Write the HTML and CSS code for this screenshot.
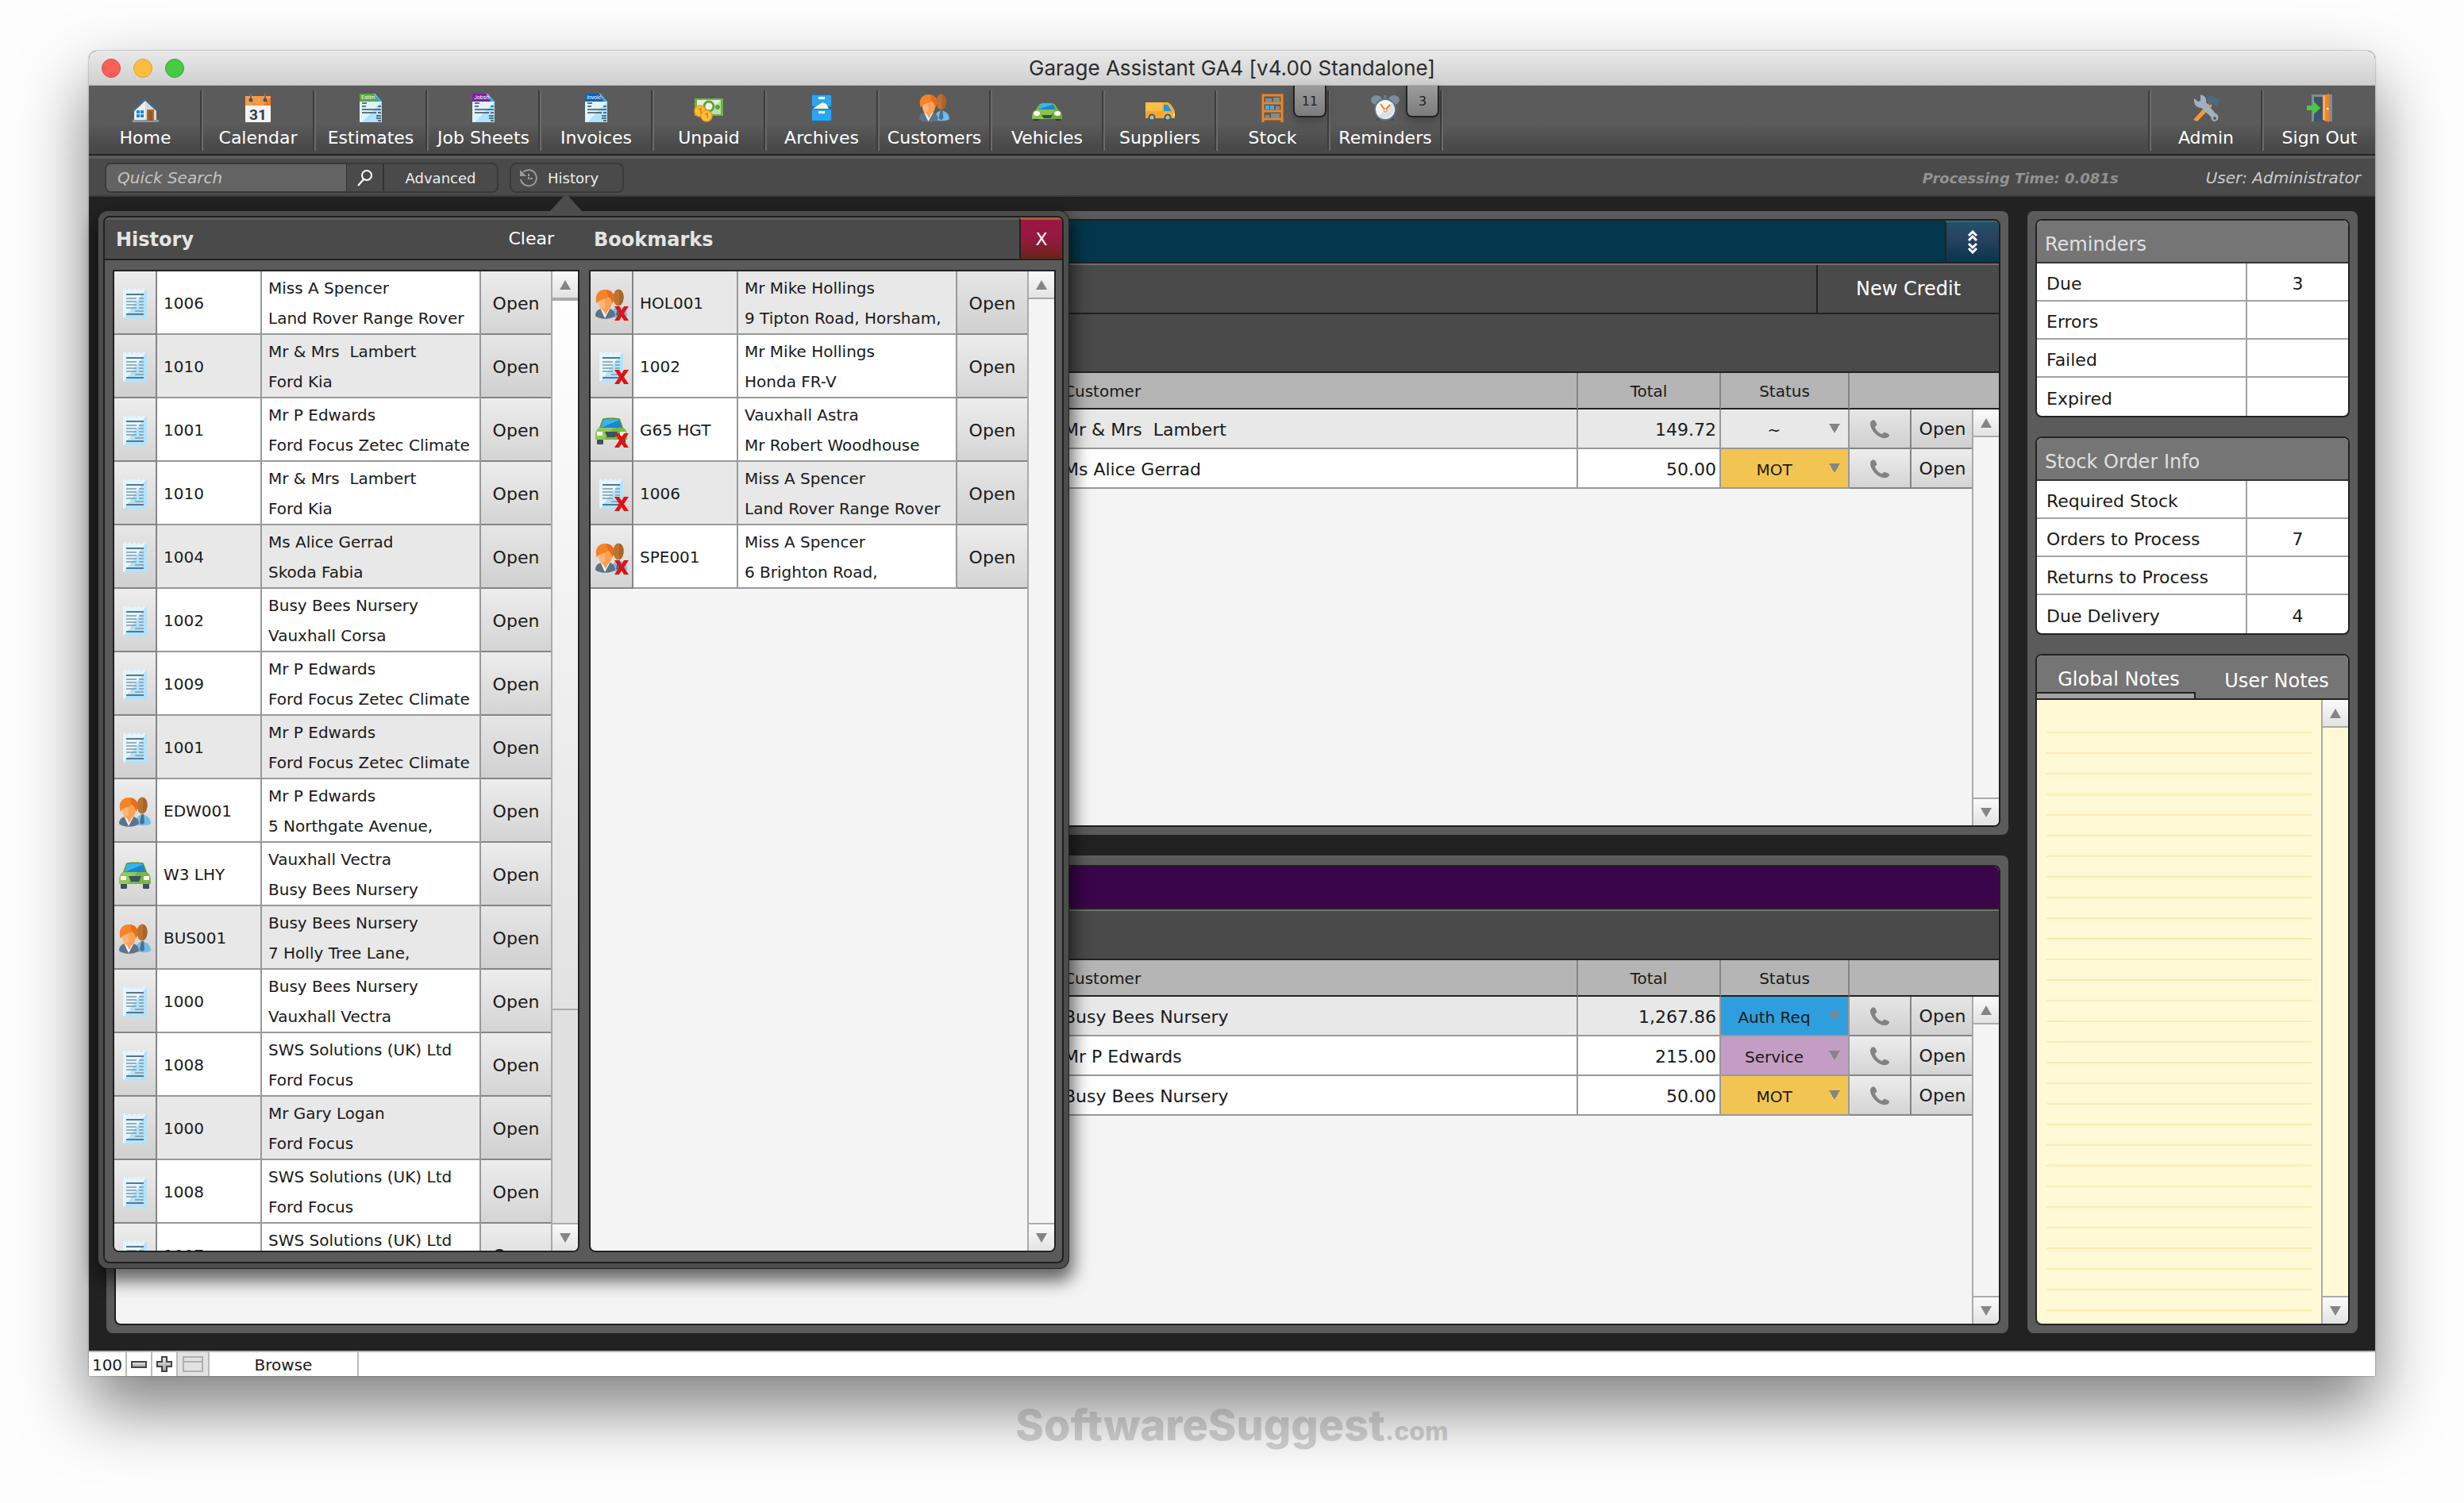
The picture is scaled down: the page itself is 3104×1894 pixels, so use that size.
FILE: index.html
```html
<!DOCTYPE html>
<html lang="en">
<head>
<meta charset="utf-8">
<title>Garage Assistant GA4</title>
<link rel="stylesheet" href="styles.css">
</head>
<body>
<svg class="sprite" aria-hidden="true">
  <defs>
    <linearGradient id="paper" x1="0" y1="0" x2="1" y2="1"><stop offset="0.5" stop-color="#e3f5fd"/><stop offset="0.5" stop-color="#b3e3fa"/></linearGradient>
    <linearGradient id="glass" x1="0" y1="0" x2="1" y2="1"><stop offset="0.5" stop-color="#36b3f3"/><stop offset="0.5" stop-color="#1a86cf"/></linearGradient>
    <linearGradient id="metal" x1="0" y1="0" x2="0" y2="1"><stop offset="0" stop-color="#eee"/><stop offset="1" stop-color="#999"/></linearGradient>
  </defs>
  <symbol id="i-home" viewBox="0 0 36 36">
    <path d="M4 20 18 7l14 13v14H4z" fill="#eceff1"/><path d="M18 7l14 13v14H18z" fill="#d5dade"/>
    <path d="M18 4 1 21l2 2L18 9l15 14 2-2z" fill="#4f6577"/><rect x="2" y="33" width="33" height="3" fill="#8a9aa5"/>
    <rect x="20" y="20" width="9" height="14" fill="#b5682c"/><rect x="22" y="22" width="5" height="12" fill="#9a5521"/>
    <path d="M7 21h4v4H7zM12 21h4v4h-4zM7 26h4v4H7zM12 26h4v4h-4z" fill="#1e88d6"/>
  </symbol>
  <symbol id="i-calendar" viewBox="0 0 36 36">
    <rect x="2" y="3" width="32" height="33" rx="1" fill="#f4f4f4"/><path d="M2 3h32v12H2z" fill="#fb9a44"/><path d="M24 15 34 5v10z" fill="#f47b20"/>
    <path d="M9 0v7M27 0v7" stroke="#607d8b" stroke-width="2"/><circle cx="9" cy="8" r="2.500" fill="#455a64"/><circle cx="27" cy="8" r="2.500" fill="#455a64"/>
  </symbol>
  <symbol id="i-sheet" viewBox="0 0 28 36">
    <path d="M0 0h19l9 10v26H0z" fill="#dff4fd"/><path d="M28 10v26H3z" fill="#b0e2fa"/>
    <path d="M0 0h18l6 10H0z" fill="currentColor"/><path d="M18 0l10 10h-5z" fill="#29a9ef"/>
    <path d="M3 12h6M3 16h5M3 20h18M3 24h18M23 16h4M21 20h6M23 24h4M21 28h6M21 31h6M23 34h4" stroke="#34495e" stroke-width="1.500"/>
  </symbol>
  <symbol id="i-unpaid" viewBox="0 0 36 36">
    <rect x="0" y="6" width="36" height="22" fill="#6cb33e"/><path d="M3 8h30v18H3z" fill="#dff0dd"/><path d="M33 8v18H14z" fill="#bcdcb9"/>
    <circle cx="18" cy="16" r="6" fill="#f2f2f2" stroke="#5aa52f" stroke-width="3"/><circle cx="29" cy="17" r="3" fill="#5aa52f"/>
    <circle cx="7" cy="22" r="7" fill="#fbc02d" stroke="#f09a20" stroke-width="1.500"/><circle cx="15" cy="28" r="7" fill="#fcc43c" stroke="#f09a20" stroke-width="1.500"/>
    <path d="M5 20l3-1v6M13 26l3-1v6" stroke="#e8871a" stroke-width="2" fill="none"/>
  </symbol>
  <symbol id="i-archive" viewBox="0 0 28 36">
    <rect x="1" y="1" width="26" height="34" fill="#1b6fb4"/><rect x="2" y="2" width="24" height="14" fill="#2aa5f0"/><rect x="2" y="20" width="24" height="14" fill="#2aa5f0"/>
    <rect x="10" y="4" width="8" height="3" fill="#fff"/><path d="M3 19l12-8 5 2 3 6z" fill="#fdf6d8"/><rect x="10" y="22" width="8" height="3" fill="#fff"/>
  </symbol>
  <symbol id="i-people" viewBox="0 0 40 38">
    <path d="M20 34c0-6 3-9 7-11h5c5 2 8 5 8 11-4 3-16 3-20 0z" fill="#6fbdeb"/><path d="M28 22h3l1 11-3 2-3-2z" fill="#4b6f8c"/>
    <ellipse cx="29" cy="11" rx="6.500" ry="10.500" fill="#b9742f"/><path d="M30 1c8 1 7 18 0 20z" fill="#a8652b"/>
    <path d="M0 34c0-5 3-8 7-9l5-2 6 2c4 1 7 4 7 9-5 5-20 5-25 0z" fill="#5c7486"/><path d="M6 24l6 13 7-13-7-3z" fill="#f5f5f5"/>
    <ellipse cx="12.500" cy="17" rx="8.500" ry="11" fill="#fdb674"/><path d="M12 28V9l8 5c2 8-3 14-8 14z" fill="#fba057"/><path d="M8 24h9l-4 9z" fill="#fba057"/>
    <path d="M2 19C-2 8 4 1 12 1s15 7 9 18c0-5-2-7-5-9-4 4-12 3-14 9z" fill="#f58426"/><path d="M14 1c8 1 13 8 7 18 0-5-2-7-5-9z" fill="#ea6c1c"/>
  </symbol>
  <symbol id="i-car" viewBox="0 0 40 34">
    <rect x="2" y="25" width="8" height="9" rx="1" fill="#3d4f5f"/><rect x="30" y="25" width="8" height="9" rx="1" fill="#3d4f5f"/>
    <path d="M9 2c1-2 21-2 22 0l4 11H5z" fill="#5d9732"/><path d="M10 3c2-1 18-1 20 0l3 10H7z" fill="url(#glass)"/>
    <path d="M5 13h30c4 2 5 6 5 15H0c0-9 1-13 5-15z" fill="#7ab648"/><path d="M5 13h18L10 28H0c0-9 1-13 5-15z" fill="#92c95a"/>
    <path d="M12 18h16l-3 7H15z" fill="#3d5262"/><path d="M2 18h7v5H2zM31 18h7v5h-7z" fill="#f6fbee"/>
  </symbol>
  <symbol id="i-vehicle" viewBox="0 0 38 36">
    <path d="M1 30h8v4H2zM29 30h8l-1 4h-6z" fill="#263747"/>
    <path d="M9 14c1-3 19-3 20 0l4 6H5z" fill="#7ab648"/><path d="M11 14c3-2 13-2 16 0l3 6H8z" fill="url(#glass)"/>
    <path d="M6 20h26c5 2 6 5 6 12H0c0-7 1-10 6-12z" fill="#8bc34a"/><path d="M30 20h2c5 2 6 5 6 12H18z" fill="#6ea83a"/>
    <path d="M12 27h14l-3 4h-8z" fill="#34495e"/><ellipse cx="6" cy="25" rx="4" ry="3" fill="#fff"/><ellipse cx="32" cy="25" rx="4" ry="3" fill="#fff"/>
  </symbol>
  <symbol id="i-van" viewBox="0 0 38 36">
    <path d="M1 11h22v20H1z" fill="#fcbf45"/><path d="M23 11h6c4 1 8 8 9 12v8H20z" fill="#fbab35"/><path d="M24 14h5l5 8H24z" fill="#2196e3"/><path d="M1 22h22v9H1z" fill="#f9a52c"/>
    <circle cx="9" cy="30" r="4.500" fill="#455a64"/><circle cx="9" cy="30" r="2.500" fill="#b0bec5"/><circle cx="29" cy="30" r="4.500" fill="#455a64"/><circle cx="29" cy="30" r="2.500" fill="#b0bec5"/>
    <path d="M36 25h2v3h-2z" fill="#fff"/>
  </symbol>
  <symbol id="i-stock" viewBox="0 0 28 36">
    <path d="M2 1v35M26 1v35M1 2h26M1 12h26M1 22h26M1 32h26" stroke="#f58220" stroke-width="3"/>
    <path d="M5 6h8v5H5zM15 5h8v6h-8z" fill="#78909c"/><path d="M5 15h5v5H5zM11 15h5v5h-5z" fill="#35aef2"/><path d="M18 16h5v4h-5zM5 27h5v4H5zM12 25h11v6H12z" fill="#78909c"/>
  </symbol>
  <symbol id="i-clock" viewBox="0 0 36 36">
    <ellipse cx="7" cy="8" rx="7" ry="6" fill="#78909c"/><ellipse cx="29" cy="8" rx="7" ry="6" fill="#78909c"/><rect x="16" y="2" width="4" height="5" fill="#607d8b"/>
    <path d="M9 30l-3 4h6zM27 30l3 4h-6z" fill="#3c5168"/>
    <circle cx="18" cy="20" r="13" fill="#f5f5f5" stroke="#5f7482" stroke-width="2"/><path d="M9 29 27 11a13 13 0 0 1-18 18z" fill="#dbe1e4"/>
    <path d="M12 13l6 8 6-7" stroke="#f58220" stroke-width="2" fill="none"/><circle cx="18" cy="21" r="2" fill="#fff" stroke="#f58220"/>
  </symbol>
  <symbol id="i-admin" viewBox="0 0 36 36">
    <path d="M2 33 22 11l4 4L7 35z" fill="#f9963b"/><path d="M18 6c3-4 9-4 13-1l4 5-4 6-4-4-5 3z" fill="#4f6a80"/>
    <path d="M3 6l5 4 3-1V3l-1-1c6-1 9 4 8 9l12 14c3 1 4 4 3 7s-6 4-8 1l-1-4L12 18c-6 0-10-5-9-12z" fill="#9db1bf"/><circle cx="29" cy="31" r="2" fill="#5b5b5b"/>
  </symbol>
  <symbol id="i-exit" viewBox="0 0 32 36">
    <path d="M6 1h26v34H6z" fill="#78909c"/><path d="M9 4h14v31H9z" fill="#3f5468"/><path d="M20 3l8-3v36l-8-3z" fill="#f58220"/><path d="M20 3l3-1v32l-3-1z" fill="#ffab57"/>
    <circle cx="26" cy="19" r="1.500" fill="#fff"/><path d="M0 15h8V9l9 9-9 9v-6H0z" fill="#4cc83d"/>
  </symbol>
  <symbol id="i-doc" viewBox="0 0 30 40">
    <path d="M0 2l2-2 3 3 3-3 3 3 3-3 3 3 3-3 3 3 3-3 3 3 1-1v36l-2 2-3-3-3 3-3-3-3 3-3-3-3 3-3-3-3 3-3-3-1 1z" fill="url(#paper)"/>
    <path d="M4 8h22M4 33h22" stroke="#5b7688" stroke-width="2"/><path d="M4 13h13M4 17h13M4 21h13M4 25h13M20 13h6M20 17h6M20 21h6M20 25h6M15 29h11" stroke="#7f99a8" stroke-width="1.500"/>
  </symbol>
  <symbol id="i-x" viewBox="0 0 18 18"><path d="M0 0h6l3 5 3-5h6l-6 9 6 9h-6l-3-5-3 5H0l6-9z" fill="#e01414"/></symbol>
  <symbol id="i-phone" viewBox="0 0 24 24"><path d="M2 1C5-1 7 2 8 5S6 8 6 9c1 4 5 8 9 9 1 0 2-3 4-2s6 2 5 4c-2 4-7 4-11 2C6 19 0 11 0 5c0-2 1-3 2-4z" fill="#828282"/></symbol>
  <symbol id="i-up" viewBox="0 0 14 12"><path d="M7 0l7 12H0z" fill="#858585"/></symbol>
  <symbol id="i-down" viewBox="0 0 14 12"><path d="M7 12l7-12H0z" fill="#858585"/></symbol>
</svg>

<main class="window">
  <header class="titlebar">
    <div class="lights"><i class="light red"></i><i class="light amber"></i><i class="light green"></i></div>
    <h1 class="window-title">Garage Assistant GA4 [v4.00 Standalone]</h1>
  </header>

  <nav class="toolbar">
    <button class="tool"><svg class="tool-icon"><use href="#i-home"/></svg>Home</button>
    <button class="tool"><svg class="tool-icon" viewBox="0 0 38 36"><use href="#i-calendar" x="1" width="36" height="36"/><text x="19" y="33" text-anchor="middle" class="icon-day">31</text></svg>Calendar</button>
    <button class="tool"><svg class="tool-icon green-sheet" viewBox="0 0 38 36"><use href="#i-sheet" x="5" width="28" height="36"/><text x="7" y="7" class="icon-tag">Estim</text></svg>Estimates</button>
    <button class="tool"><svg class="tool-icon purple-sheet" viewBox="0 0 38 36"><use href="#i-sheet" x="5" width="28" height="36"/><text x="7" y="7" class="icon-tag">Jobsh</text></svg>Job Sheets</button>
    <button class="tool"><svg class="tool-icon blue-sheet" viewBox="0 0 38 36"><use href="#i-sheet" x="5" width="28" height="36"/><text x="7" y="7" class="icon-tag">Invoic</text></svg>Invoices</button>
    <button class="tool"><svg class="tool-icon"><use href="#i-unpaid"/></svg>Unpaid</button>
    <button class="tool"><svg class="tool-icon"><use href="#i-archive"/></svg>Archives</button>
    <button class="tool"><svg class="tool-icon"><use href="#i-people"/></svg>Customers</button>
    <button class="tool"><svg class="tool-icon"><use href="#i-vehicle"/></svg>Vehicles</button>
    <button class="tool"><svg class="tool-icon"><use href="#i-van"/></svg>Suppliers</button>
    <button class="tool"><svg class="tool-icon"><use href="#i-stock"/></svg>Stock<span class="badge">11</span></button>
    <button class="tool"><svg class="tool-icon"><use href="#i-clock"/></svg>Reminders<span class="badge">3</span></button>
    <span class="toolbar-space"></span>
    <button class="tool"><svg class="tool-icon"><use href="#i-admin"/></svg>Admin</button>
    <button class="tool"><svg class="tool-icon"><use href="#i-exit"/></svg>Sign Out</button>
  </nav>

  <div class="subbar">
    <form class="search">
      <input class="search-input" type="text" placeholder="Quick Search" aria-label="Quick Search">
      <button class="search-go" type="button" aria-label="Search"><svg width="20" height="22" viewBox="0 0 20 22"><circle cx="12" cy="8" r="6" fill="none" stroke="#fff" stroke-width="2"/><path d="M8 13l-7 8" stroke="#fff" stroke-width="2"/></svg></button>
      <button class="search-adv" type="button">Advanced</button>
    </form>
    <button class="history-btn"><svg width="24" height="24" viewBox="0 0 24 24" fill="none" stroke="#9a9a9a" stroke-width="2"><path d="M5 5a10 10 0 1 1-3 9"/><path d="M1 2v8h8z" fill="#9a9a9a" stroke="none"/><path d="M12 7v6h5" stroke-dasharray="3 1"/></svg>History</button>
    <span class="subbar-space"></span>
    <span class="timing">Processing Time: 0.081s</span>
    <span class="user">User: Administrator</span>
  </div>

  <div class="workspace">
    <div class="panels">
      <section class="panel panel-first">
        <div class="frame">
          <div class="bar bar-blue"><button class="toggle" aria-label="Resize panel"><svg width="14" height="30" viewBox="0 0 14 30" fill="none" stroke="#fff" stroke-width="3"><path d="M2 7l5-5 5 5M2 13l5-5 5 5M2 17l5 5 5-5M2 23l5 5 5-5"/></svg></button></div>
          <div class="tabs"><button class="tab">New Credit</button></div>
          <div class="filters"></div>
          <div class="grid">
            <table class="jobs">
              <colgroup><col class="c-lead"><col><col class="c-total"><col class="c-status"><col class="c-act"><col class="c-act"><col class="c-scroll"></colgroup>
              <thead><tr><th></th><th class="left">Customer</th><th>Total</th><th>Status</th><th colspan="3"></th></tr></thead>
              <tbody>
                <tr class="alt"><td></td><td>Mr &amp; Mrs  Lambert</td><td class="num">149.72</td><td class="st"><select aria-label="Status"><option>~</option></select></td><td class="act"><button aria-label="Call"><svg width="24" height="24"><use href="#i-phone"/></svg></button></td><td class="act"><button>Open</button></td><td class="none"></td></tr>
                <tr><td></td><td>Ms Alice Gerrad</td><td class="num">50.00</td><td class="st mot"><select aria-label="Status"><option>MOT</option></select></td><td class="act"><button aria-label="Call"><svg width="24" height="24"><use href="#i-phone"/></svg></button></td><td class="act"><button>Open</button></td><td class="none"></td></tr>
              </tbody>
            </table>
            <div class="scroll"><button aria-label="Up"><svg width="14" height="12"><use href="#i-up"/></svg></button><span class="track"></span><button aria-label="Down"><svg width="14" height="12"><use href="#i-down"/></svg></button></div>
          </div>
        </div>
      </section>
      <section class="panel panel-second">
        <div class="frame">
          <div class="bar bar-purple"></div>
          <div class="tabs"></div>
          <div class="grid">
            <table class="jobs">
              <colgroup><col class="c-lead"><col><col class="c-total"><col class="c-status"><col class="c-act"><col class="c-act"><col class="c-scroll"></colgroup>
              <thead><tr><th></th><th class="left">Customer</th><th>Total</th><th>Status</th><th colspan="3"></th></tr></thead>
              <tbody>
                <tr class="alt"><td></td><td>Busy Bees Nursery</td><td class="num">1,267.86</td><td class="st auth"><select aria-label="Status"><option>Auth Req</option></select></td><td class="act"><button aria-label="Call"><svg width="24" height="24"><use href="#i-phone"/></svg></button></td><td class="act"><button>Open</button></td><td class="none"></td></tr>
                <tr><td></td><td>Mr P Edwards</td><td class="num">215.00</td><td class="st service"><select aria-label="Status"><option>Service</option></select></td><td class="act"><button aria-label="Call"><svg width="24" height="24"><use href="#i-phone"/></svg></button></td><td class="act"><button>Open</button></td><td class="none"></td></tr>
                <tr><td></td><td>Busy Bees Nursery</td><td class="num">50.00</td><td class="st mot"><select aria-label="Status"><option>MOT</option></select></td><td class="act"><button aria-label="Call"><svg width="24" height="24"><use href="#i-phone"/></svg></button></td><td class="act"><button>Open</button></td><td class="none"></td></tr>
              </tbody>
            </table>
            <div class="scroll"><button aria-label="Up"><svg width="14" height="12"><use href="#i-up"/></svg></button><span class="track"></span><button aria-label="Down"><svg width="14" height="12"><use href="#i-down"/></svg></button></div>
          </div>
        </div>
      </section>
    </div>

    <aside class="sidebar">
      <section class="card">
        <h2 class="card-title">Reminders</h2>
        <table class="facts">
          <tr><th>Due</th><td>3</td></tr><tr><th>Errors</th><td></td></tr><tr><th>Failed</th><td></td></tr><tr><th>Expired</th><td></td></tr>
        </table>
      </section>
      <section class="card">
        <h2 class="card-title">Stock Order Info</h2>
        <table class="facts">
          <tr><th>Required Stock</th><td></td></tr><tr><th>Orders to Process</th><td>7</td></tr><tr><th>Returns to Process</th><td></td></tr><tr><th>Due Delivery</th><td>4</td></tr>
        </table>
      </section>
      <section class="card notes">
        <div class="note-tabs"><button class="note-tab active">Global Notes</button><button class="note-tab">User Notes</button></div>
        <div class="note-body">
          <textarea class="note-text" aria-label="Global Notes"></textarea>
          <div class="scroll"><button aria-label="Up"><svg width="14" height="12"><use href="#i-up"/></svg></button><span class="track"></span><button aria-label="Down"><svg width="14" height="12"><use href="#i-down"/></svg></button></div>
        </div>
      </section>
    </aside>

    <div class="popup">
      <svg class="popup-arrow" width="44" height="24" viewBox="0 0 44 24"><path d="M22 1 43 24H1z" fill="#4c4c4c"/></svg>
      <div class="popup-frame">
        <div class="popup-head">
          <div class="popup-side"><h2>History</h2><button class="clear">Clear</button></div>
          <div class="popup-side"><h2>Bookmarks</h2></div>
          <button class="close" aria-label="Close">X</button>
        </div>
        <div class="popup-body">
          <div class="list">
            <div class="view">
              <table class="entries">
                <colgroup><col class="e-icon"><col class="e-id"><col><col class="e-open"></colgroup>
                <tr><td class="btn"><button aria-label="Job"><svg width="30" height="40"><use href="#i-doc"/></svg></button></td><td>1006</td><td>Miss A Spencer<br>Land Rover Range Rover</td><td class="btn"><button>Open</button></td></tr>
                <tr class="alt"><td class="btn"><button aria-label="Job"><svg width="30" height="40"><use href="#i-doc"/></svg></button></td><td>1010</td><td>Mr &amp; Mrs  Lambert<br>Ford Kia</td><td class="btn"><button>Open</button></td></tr>
                <tr><td class="btn"><button aria-label="Job"><svg width="30" height="40"><use href="#i-doc"/></svg></button></td><td>1001</td><td>Mr P Edwards<br>Ford Focus Zetec Climate</td><td class="btn"><button>Open</button></td></tr>
                <tr><td class="btn"><button aria-label="Job"><svg width="30" height="40"><use href="#i-doc"/></svg></button></td><td>1010</td><td>Mr &amp; Mrs  Lambert<br>Ford Kia</td><td class="btn"><button>Open</button></td></tr>
                <tr class="alt"><td class="btn"><button aria-label="Job"><svg width="30" height="40"><use href="#i-doc"/></svg></button></td><td>1004</td><td>Ms Alice Gerrad<br>Skoda Fabia</td><td class="btn"><button>Open</button></td></tr>
                <tr><td class="btn"><button aria-label="Job"><svg width="30" height="40"><use href="#i-doc"/></svg></button></td><td>1002</td><td>Busy Bees Nursery<br>Vauxhall Corsa</td><td class="btn"><button>Open</button></td></tr>
                <tr><td class="btn"><button aria-label="Job"><svg width="30" height="40"><use href="#i-doc"/></svg></button></td><td>1009</td><td>Mr P Edwards<br>Ford Focus Zetec Climate</td><td class="btn"><button>Open</button></td></tr>
                <tr class="alt"><td class="btn"><button aria-label="Job"><svg width="30" height="40"><use href="#i-doc"/></svg></button></td><td>1001</td><td>Mr P Edwards<br>Ford Focus Zetec Climate</td><td class="btn"><button>Open</button></td></tr>
                <tr><td class="btn"><button aria-label="Customer"><svg width="40" height="38"><use href="#i-people"/></svg></button></td><td>EDW001</td><td>Mr P Edwards<br>5 Northgate Avenue,</td><td class="btn"><button>Open</button></td></tr>
                <tr><td class="btn"><button aria-label="Vehicle"><svg width="40" height="34"><use href="#i-car"/></svg></button></td><td>W3 LHY</td><td>Vauxhall Vectra<br>Busy Bees Nursery</td><td class="btn"><button>Open</button></td></tr>
                <tr class="alt"><td class="btn"><button aria-label="Customer"><svg width="40" height="38"><use href="#i-people"/></svg></button></td><td>BUS001</td><td>Busy Bees Nursery<br>7 Holly Tree Lane,</td><td class="btn"><button>Open</button></td></tr>
                <tr><td class="btn"><button aria-label="Job"><svg width="30" height="40"><use href="#i-doc"/></svg></button></td><td>1000</td><td>Busy Bees Nursery<br>Vauxhall Vectra</td><td class="btn"><button>Open</button></td></tr>
                <tr><td class="btn"><button aria-label="Job"><svg width="30" height="40"><use href="#i-doc"/></svg></button></td><td>1008</td><td>SWS Solutions (UK) Ltd<br>Ford Focus</td><td class="btn"><button>Open</button></td></tr>
                <tr class="alt"><td class="btn"><button aria-label="Job"><svg width="30" height="40"><use href="#i-doc"/></svg></button></td><td>1000</td><td>Mr Gary Logan<br>Ford Focus</td><td class="btn"><button>Open</button></td></tr>
                <tr><td class="btn"><button aria-label="Job"><svg width="30" height="40"><use href="#i-doc"/></svg></button></td><td>1008</td><td>SWS Solutions (UK) Ltd<br>Ford Focus</td><td class="btn"><button>Open</button></td></tr>
                <tr><td class="btn"><button aria-label="Job"><svg width="30" height="40"><use href="#i-doc"/></svg></button></td><td>1007</td><td>SWS Solutions (UK) Ltd<br>Ford Focus</td><td class="btn"><button>Open</button></td></tr>
              </table>
            </div>
            <div class="scroll"><button aria-label="Up"><svg width="14" height="12"><use href="#i-up"/></svg></button><span class="track long"><span class="thumb"></span></span><button aria-label="Down"><svg width="14" height="12"><use href="#i-down"/></svg></button></div>
          </div>
          <div class="list">
            <div class="view">
              <table class="entries">
                <colgroup><col class="e-icon"><col class="e-id"><col><col class="e-open"></colgroup>
                <tr class="alt"><td class="btn"><button class="remove" aria-label="Remove"><svg width="40" height="38"><use href="#i-people"/></svg><svg class="cross"><use href="#i-x"/></svg></button></td><td>HOL001</td><td>Mr Mike Hollings<br>9 Tipton Road, Horsham,</td><td class="btn"><button>Open</button></td></tr>
                <tr><td class="btn"><button class="remove" aria-label="Remove"><svg width="30" height="40"><use href="#i-doc"/></svg><svg class="cross"><use href="#i-x"/></svg></button></td><td>1002</td><td>Mr Mike Hollings<br>Honda FR-V</td><td class="btn"><button>Open</button></td></tr>
                <tr><td class="btn"><button class="remove" aria-label="Remove"><svg width="40" height="34"><use href="#i-car"/></svg><svg class="cross"><use href="#i-x"/></svg></button></td><td>G65 HGT</td><td>Vauxhall Astra<br>Mr Robert Woodhouse</td><td class="btn"><button>Open</button></td></tr>
                <tr class="alt"><td class="btn"><button class="remove" aria-label="Remove"><svg width="30" height="40"><use href="#i-doc"/></svg><svg class="cross"><use href="#i-x"/></svg></button></td><td>1006</td><td>Miss A Spencer<br>Land Rover Range Rover</td><td class="btn"><button>Open</button></td></tr>
                <tr><td class="btn"><button class="remove" aria-label="Remove"><svg width="40" height="38"><use href="#i-people"/></svg><svg class="cross"><use href="#i-x"/></svg></button></td><td>SPE001</td><td>Miss A Spencer<br>6 Brighton Road,</td><td class="btn"><button>Open</button></td></tr>
              </table>
            </div>
            <div class="scroll"><button aria-label="Up"><svg width="14" height="12"><use href="#i-up"/></svg></button><span class="track"></span><button aria-label="Down"><svg width="14" height="12"><use href="#i-down"/></svg></button></div>
          </div>
        </div>
      </div>
    </div>
  </div>

  <footer class="statusbar">
    <span class="zoom">100</span>
    <button class="sb" aria-label="Zoom out"><svg width="22" height="22" viewBox="0 0 22 22"><rect x="2" y="8" width="18" height="7" fill="url(#metal)" stroke="#444" stroke-width="2"/></svg></button>
    <button class="sb" aria-label="Zoom in"><svg width="22" height="22" viewBox="0 0 22 22"><path d="M8 2h6v6h6v6h-6v6H8v-6H2V8h6z" fill="url(#metal)" stroke="#444" stroke-width="2"/></svg></button>
    <button class="sb sb-off" aria-label="Toggle toolbar"><svg width="26" height="20" viewBox="0 0 26 20"><path d="M1 1h24v18H1zM1 7h24" fill="none" stroke="#b0b0b0" stroke-width="2"/></svg></button>
    <button class="mode">Browse</button>
  </footer>
</main>
<p class="credit">SoftwareSuggest<small>.com</small></p>
</body>
</html>
```
FILE: styles.css
```css
* { box-sizing: border-box; }
body {
  margin: 0; min-height: 100vh; padding: 64px 112px 0; background: #fdfdfd;
  display: flex; flex-direction: column;
  font-family: "DejaVu Sans", Verdana, sans-serif; font-size: 22px; color: #1a1a1a;
}
button, input, select, textarea { font: inherit; color: inherit; margin: 0; padding: 0; border: 0; background: none; border-radius: 0; }
h1, h2, p { margin: 0; font-weight: normal; }
svg { display: block; }
.sprite { position: absolute; width: 0; height: 0; }
.icon-day { font: bold 19px Roboto, sans-serif; fill: #2c3e50; }
.icon-tag { font: 7px Roboto, sans-serif; fill: #fff; }

.window {
  flex: 1; display: flex; flex-direction: column; background: #222;
  border-radius: 10px 10px 0 0;
  box-shadow: 0 0 2px rgba(0,0,0,.5), 0 40px 84px rgba(0,0,0,.5);
}
.titlebar {
  height: 44px; display: grid; grid-template-columns: 1fr auto 1fr; align-items: center; padding: 0 16px;
  background: linear-gradient(#e9e9e9, #cfcfcf); border-bottom: 1px solid #b0b0b0; border-radius: 10px 10px 0 0;
}
.lights { display: flex; gap: 16px; }
.light { width: 24px; height: 24px; border-radius: 50%; border: 1px solid; }
.red { background: #fc605b; border-color: #e0443e; }
.amber { background: #fdbc40; border-color: #e0a02e; }
.green { background: #48c944; border-color: #2aa83a; }
.window-title { font-family: Inter, sans-serif; font-size: 26px; line-height: 40px; color: #2b2b2b; }

.toolbar {
  height: 88px; display: flex; padding: 6px 0 4px;
  background: linear-gradient(#5b5b5b 55%, #494949 90%); border-bottom: 2px solid #222;
}
.tool {
  width: 142px; display: flex; flex-direction: column; align-items: center; position: relative;
  padding: 4px 0 0 2px; color: #fff; font-size: 22px; line-height: 32px; white-space: nowrap;
  border-right: 2px solid #3c3c3c; box-shadow: 2px 0 #6a6a6a;
}
.tool:last-child { border-right: 0; box-shadow: none; }
.tool-icon { width: 38px; height: 36px; flex: none; margin-bottom: 4px; }
.toolbar-space { flex: 1; border-right: 2px solid #3c3c3c; box-shadow: 2px 0 #6a6a6a; }
.green-sheet { color: #56a646; }
.purple-sheet { color: #7a1fa2; }
.blue-sheet { color: #0a62b3; }
.badge {
  position: absolute; right: 1px; top: -6px; width: 42px; height: 40px; line-height: 40px;
  background: linear-gradient(#9c9c9c, #7c7c7c); border: 2px solid #222; border-top: 0; border-radius: 0 0 8px 8px;
  font-size: 16px; color: #222; text-align: center; box-shadow: 0 6px 14px rgba(0,0,0,.25);
}

.subbar {
  height: 52px; display: flex; align-items: center; padding: 4px 18px 2px 20px;
  background: #4a4a4a; border-top: 4px solid #5b5b5b; border-bottom: 2px solid #3c3c3c;
}
.search { display: flex; height: 38px; border: 2px solid #3a3a3a; border-radius: 8px; overflow: hidden; }
.search-input { width: 302px; padding-left: 14px; background: #636363; font-size: 20px; font-style: italic; color: #fff; }
.search-input::placeholder { color: #c4c4c4; opacity: 1; }
.search-go { width: 48px; display: grid; place-items: center; border-left: 1px solid #333; border-right: 2px solid #333; }
.search-adv { width: 142px; font-size: 18px; color: #eee; }
.history-btn {
  height: 38px; width: 144px; margin-left: 14px; padding-left: 10px; display: flex; align-items: center; gap: 12px;
  border: 2px solid #3a3a3a; border-radius: 8px; font-size: 18px; color: #eee;
}
.subbar-space { flex: 1; }
.timing { font-size: 18px; font-weight: bold; font-style: italic; color: #929292; }
.user { font-size: 20px; font-style: italic; color: #ccc; margin-left: 110px; }

.workspace { flex: 1; min-height: 0; position: relative; display: flex; gap: 24px; padding: 18px 22px 22px; }
.panels { flex: 1; display: flex; flex-direction: column; gap: 26px; }
.panel { display: flex; padding: 10px; background: #5b5b5b; border-radius: 8px; }
.panel-first { flex: 766 0 0; }
.panel-second { flex: 580 0 0; padding-top: 12px; }
.frame { flex: 1; display: flex; flex-direction: column; border: 2px solid #1f1f1f; border-radius: 8px; overflow: hidden; background: #f4f4f4; }
.bar { height: 54px; flex: none; display: flex; justify-content: flex-end; border-bottom: 2px solid #222; }
.bar-blue { background: #04374c; }
.bar-purple { background: #3b054b; }
.toggle { width: 68px; display: grid; place-items: center; border-left: 2px solid #222; border-top: 2px solid #41617d; background: linear-gradient(#205268, #2b4160 40%, #04374c); }
.tabs { height: 64px; flex: none; display: flex; justify-content: flex-end; background: #4a4a4a; border-top: 2px solid #6e6e6e; border-bottom: 2px solid #222; }
.tab { width: 230px; border-left: 2px solid #222; font-size: 24px; color: #fff; }
.filters { height: 74px; flex: none; background: #4a4a4a; border-bottom: 2px solid #222; }
.grid { flex: 1; display: grid; grid-template: 46px 1fr / 1fr 34px; }
.grid .jobs { grid-area: 1 / 1 / 3 / 3; align-self: start; }
.grid .scroll { grid-area: 2 / 2; }

.jobs { width: 100%; table-layout: fixed; border-spacing: 0; white-space: pre; }
.c-lead { width: 1188px; }
.c-total { width: 180px; }
.c-status { width: 162px; }
.c-act { width: 78px; }
.c-scroll { width: 32px; }
.jobs th { height: 46px; padding: 1px 0 0; background: #b5b5b5; border-right: 2px solid #858585; border-bottom: 2px solid #222; font-size: 20px; font-weight: normal; }
.jobs th:first-child, .jobs td:first-child { border-right: 0; }
.jobs th:last-child { border-right: 0; }
.jobs .left { text-align: left; padding-left: 6px; }
.jobs td { height: 50px; padding: 2px 4px 0 6px; background: #fff; border-right: 2px solid #999; border-bottom: 2px solid #999; }
.jobs .alt td { background: #e8e8e8; }
.jobs .num { text-align: right; }
.jobs .none, .jobs .alt .none { background: none; border: 0; }
.jobs .st, .jobs .act { padding: 0; }
.jobs .act { border-color: #858585; }
.jobs .act:nth-child(6) { border-right: 0; }
.st select {
  display: block; width: 100%; height: 48px; padding: 3px 26px 0 0; appearance: none; font-size: 20px; text-align: center; text-align-last: center;
  background: conic-gradient(from -30deg at 50% 100%, #858585 60deg, transparent 0) no-repeat right 10px center / 14px 12px;
}
.jobs .mot { background: #f2c552; }
.jobs .auth, .jobs .alt .auth { background: #2f9ede; }
.jobs .service { background: #c39dc3; }
.act button, .btn button { display: grid; place-items: center; width: 100%; height: 48px; padding-top: 1px; background: linear-gradient(#ededed, #d4d4d4); }

.scroll { display: flex; flex-direction: column; width: 34px; flex: none; border-left: 2px solid #aaa; }
.scroll button { height: 33px; flex: none; display: grid; place-items: center; background: linear-gradient(#fafafa, #e3e3e3); }
.track { flex: 1; border-top: 2px solid #aaa; border-bottom: 2px solid #aaa; }
.long { background: #e0e0e0; display: flex; flex-direction: column; }
.thumb { flex: 0 0 77%; border-top: 2px solid #aaa; border-bottom: 2px solid #aaa; background: linear-gradient(#fefefe, #e2e2e2); }

.sidebar { width: 416px; display: flex; flex-direction: column; gap: 24px; padding: 10px; background: #5b5b5b; border-radius: 8px; }
.card { border: 2px solid #222; border-radius: 8px; overflow: hidden; background: #fff; }
.card-title { height: 54px; padding: 5px 0 0 10px; line-height: 50px; background: #757575; border-bottom: 2px solid #333; font-size: 24px; color: #e0e0e0; }
.facts { width: 100%; table-layout: fixed; border-spacing: 0; font-size: 22px; }
.facts th, .facts td { height: 48px; padding: 4px 0 0; border-bottom: 2px solid #a3a3a3; }
.facts th { width: 265px; padding-left: 12px; font-weight: normal; text-align: left; border-right: 2px solid #a3a3a3; }
.facts td { text-align: center; }
.facts tr:last-child > * { border-bottom: 0; }
.notes { flex: 1; display: flex; flex-direction: column; background: #fffad5; }
.note-tabs { height: 56px; flex: none; display: grid; grid-template-columns: 200px 1fr; background: #757575; border-bottom: 2px solid #222; }
.note-tab { font-size: 24px; color: #fff; padding: 10px 0 0 12px; }
.note-tab.active {
  padding: 6px 0 0 6px;
  background: linear-gradient(#222, #222) no-repeat right bottom / 2px 8px, linear-gradient(#222 2px, #a3a3a3 2px) no-repeat left bottom / 100% 8px;
}
.note-body { flex: 1; display: flex; }
.note-text {
  flex: 1; min-width: 0; resize: none; outline: 0; padding: 0 12px; line-height: 26px;
  background: repeating-linear-gradient(transparent 0 24px, #ffe9b4 24px 26px) content-box no-repeat;
  background-position: 0 8px; border-top: 8px solid transparent; border-bottom: 14px solid transparent;
}

.popup {
  position: absolute; left: 12px; top: 18px; bottom: 104px; width: 1222px; display: flex;
  border: 6px solid #4c4c4c; border-radius: 12px; background: #4c4c4c;
  box-shadow: 0 0 0 1px #222, 2px 12px 22px 4px rgba(0,0,0,.6);
}
.popup-arrow { position: absolute; left: 561px; top: -29px; }
.popup-frame { flex: 1; display: flex; flex-direction: column; min-height: 0; border: 2px solid #1f1f1f; border-radius: 8px; background: #5a5a5a; overflow: hidden; }
.popup-head { height: 54px; flex: none; display: grid; grid-template-columns: 602px 1fr 54px; border-bottom: 2px solid #222; background: #4a4a4a; box-shadow: inset 0 3px #5b5b5b; }
.popup-side { display: flex; justify-content: space-between; align-items: center; padding: 4px 36px 0 14px; }
.popup-side h2 { font-size: 24px; font-weight: bold; color: #e4e4e4; }
.clear { color: #fff; font-size: 22px; padding-bottom: 4px; }
.close { border-left: 2px solid #222; border-top: 3px solid #b05a35; background: linear-gradient(#991843 40%, #6a241c); color: #fff; font-size: 22px; }
.popup-body { flex: 1; min-height: 0; display: grid; grid-template-columns: 1fr 1fr; gap: 12px; padding: 12px 8px 12px 10px; }
.list { display: flex; min-height: 0; border: 2px solid #222; border-radius: 0 0 8px 8px; background: #f4f4f4; overflow: hidden; }
.view { flex: 1; overflow: hidden; }
.entries { width: 100%; table-layout: fixed; border-spacing: 0; font-size: 20px; line-height: 38px; white-space: pre; }
.e-icon { width: 54px; }
.e-id { width: 132px; }
.e-open { width: 88px; }
.entries td { height: 80px; padding: 2px 0 0 8px; background: #fff; border-right: 2px solid #999; border-bottom: 2px solid #999; }
.entries .alt td { background: #e8e8e8; }
.entries .btn { padding: 0; border-color: #858585; }
.entries td:last-child { border-right: 0; }
.entries button { height: 78px; padding-top: 3px; font-size: 22px; }
.alt button { background: linear-gradient(#e6e6e6, #d0d0d0); }
.remove { position: relative; }
.cross { position: absolute; right: 4px; bottom: 16px; width: 18px; height: 18px; }

.statusbar { height: 32px; flex: none; display: flex; background: #fff; border-top: 2px solid #b5b5b5; font-size: 20px; line-height: 32px; }
.zoom { width: 48px; text-align: center; border-right: 2px solid #bbb; }
.sb { width: 32px; display: grid; place-items: center; border-right: 2px solid #bbb; }
.sb-off { width: 40px; background: #e2e2e2; }
.mode { width: 188px; border-right: 2px solid #bbb; }

.credit { position: relative; height: 160px; flex: none; text-align: center; font: 800 54px/124px Inter, sans-serif; color: rgba(120,120,120,.34); }
.credit small { font-size: 32px; }
```
